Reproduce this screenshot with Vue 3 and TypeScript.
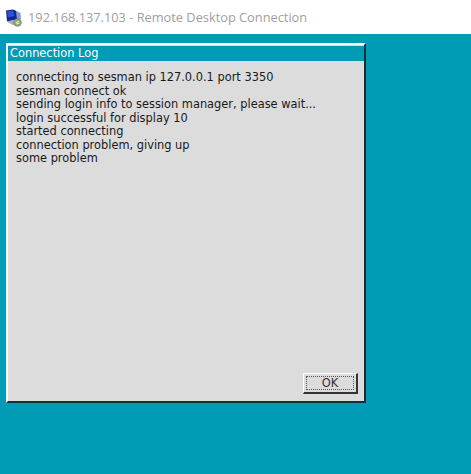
<script setup lang="ts">
const lines: string[] = [
  'connecting to sesman ip 127.0.0.1 port 3350',
  'sesman connect ok',
  'sending login info to session manager, please wait...',
  'login successful for display 10',
  'started connecting',
  'connection problem, giving up',
  'some problem',
]
</script>

<template>
  <div class="page">
    <header class="titlebar">
      <svg class="app-icon" width="18" height="18" viewBox="0 0 18 18">
        <path d="M1 1.5 L8 0.5 L11.5 2 L12 10.5 L2 12.5 Z" fill="#16249c" />
        <path d="M2 2.5 L8 1.5 L9.5 7 L3 8.5 Z" fill="#2c52d6" />
        <path d="M11.5 2 L15.5 4 L16 10 L12 10.5 Z" fill="#8f9bb0" />
        <path d="M1.5 12.5 L12 10.5 L16.5 12.5 L8 16 Z" fill="#a4adb8" />
        <circle cx="12.5" cy="13.5" r="3.8" fill="#8fae6a" stroke="#6f7f78" stroke-width="0.8" />
        <path d="M10.6 13.6 L14.2 12.4 M14.4 14.2 L11.2 15" stroke="#f2f6ea" stroke-width="0.9" fill="none" />
      </svg>
      <span class="title-text">192.168.137.103 - Remote Desktop Connection</span>
    </header>
    <main class="desktop">
      <section class="window">
        <div class="caption">Connection Log</div>
        <div class="body">
          <div class="log">
            <div v-for="line in lines" :key="line" class="log-line">{{ line }}</div>
          </div>
          <div class="actions">
            <button class="ok" type="button"><span class="ok-inner">OK</span></button>
          </div>
        </div>
      </section>
    </main>
  </div>
</template>

<style>
html, body { margin: 0; padding: 0; background: #009cb5; }
</style>

<style scoped>
.page { width: 471px; height: 474px; display: flex; flex-direction: column; overflow: hidden; }
.titlebar {
  height: 34px; flex: none; background: #fff; display: flex; align-items: center;
  padding: 0 0 0 5px; gap: 5px; box-sizing: border-box;
}
.app-icon { flex: none; margin-top: 1px; }
.title-text { font-family: "Open Sans", sans-serif; font-size: 12.8px; color: #a0a0a0; white-space: nowrap; }
.desktop { flex: 1; background: #009cb5; padding: 9px 0 0 6px; }
.window {
  width: 360px; height: 360px; box-sizing: border-box; background: #dcdcdc;
  border-style: solid; border-width: 2px; border-color: #fff #10303a #10303a #fff;
  padding: 1px 0 0 0; display: flex; flex-direction: column;
}
.caption {
  height: 15px; background: #009cb5; color: #fff; flex: none;
  font-family: "DejaVu Sans", sans-serif; font-size: 11.4px; line-height: 15px; padding-left: 2px;
}
.body { flex: 1; display: flex; flex-direction: column; padding: 10px 6px 7px 8px; min-height: 0; }
.log { flex: 1; font-family: "DejaVu Sans", sans-serif; font-size: 11.4px; line-height: 13.5px; color: #1a1a1a; }
.log-line { white-space: nowrap; }
.actions { display: flex; justify-content: flex-end; }
.ok {
  width: 55px; height: 21px; padding: 2px; background: #dcdcdc; box-sizing: border-box;
  border-style: solid; border-width: 1px 2px 2px 1px; border-color: #fff #333 #333 #fff;
  display: flex; margin: 0;
}
.ok-inner {
  flex: 1; border: 1px dotted #555; font-family: "DejaVu Sans", sans-serif; font-size: 11.4px;
  line-height: 13px; color: #333; text-align: center;
}
</style>
